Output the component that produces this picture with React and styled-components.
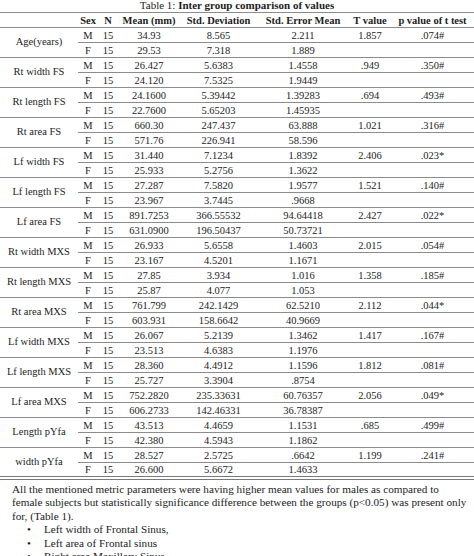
import React from "react";
import styled, { createGlobalStyle } from "styled-components";

const Global = createGlobalStyle`
  html, body { margin: 0; padding: 0; background: #ffffff; }
  body { width: 474px; height: 556px; overflow: hidden; font-family: "Liberation Serif", "Times New Roman", serif; color: #1c1c1c; }
`;

const Page = styled.div`
  width: 474px;
  display: flex;
  flex-direction: column;
`;

const Caption = styled.div`
  height: 12px;
  line-height: 12px;
  margin-top: -1px;
  margin-bottom: 1px;
  font-size: 11px;
  text-align: center;
  white-space: nowrap;
  b { font-weight: bold; }
`;

const Table = styled.table`
  width: 474px;
  table-layout: fixed;
  border-collapse: collapse;
  font-size: 10.5px;
  border-top: 1px solid #8c8c8c;
  border-bottom: 4px double #7a7a7a;
`;

const HeadCell = styled.th`
  height: 14px;
  padding: 0;
  font-weight: bold;
  text-align: center;
  white-space: nowrap;
  line-height: 13px;
  vertical-align: middle;
`;

const Row = styled.tr`
  height: 15px;
`;

const Cell = styled.td`
  padding: 0;
  text-align: center;
  white-space: nowrap;
  line-height: 13px;
  vertical-align: middle;
  border-top: 1px solid #8c8c8c;
`;

const LabelCell = styled(Cell)`
  padding-bottom: 2px;
`;

const Text = styled.div`
  padding: 3px 0 0 12px;
  font-size: 11.2px;
  line-height: 13.4px;
`;

const Para = styled.p`
  margin: 0;
  white-space: nowrap;
`;

const Bullets = styled.ul`
  margin: 0;
  padding: 0 0 0 44px;
  list-style: none;
  margin-left: -12px;
`;

const Bullet = styled.li`
  position: relative;
  &::before {
    content: "•";
    position: absolute;
    left: -17px;
  }
`;

const widths = [78, 20, 20, 62, 77, 92, 42, 83];

const groups = [
  ["Age(years)", ["34.93", "8.565", "2.211", "1.857", ".074#"], ["29.53", "7.318", "1.889"]],
  ["Rt width FS", ["26.427", "5.6383", "1.4558", ".949", ".350#"], ["24.120", "7.5325", "1.9449"]],
  ["Rt length FS", ["24.1600", "5.39442", "1.39283", ".694", ".493#"], ["22.7600", "5.65203", "1.45935"]],
  ["Rt area FS", ["660.30", "247.437", "63.888", "1.021", ".316#"], ["571.76", "226.941", "58.596"]],
  ["Lf width FS", ["31.440", "7.1234", "1.8392", "2.406", ".023*"], ["25.933", "5.2756", "1.3622"]],
  ["Lf length FS", ["27.287", "7.5820", "1.9577", "1.521", ".140#"], ["23.967", "3.7445", ".9668"]],
  ["Lf area FS", ["891.7253", "366.55532", "94.64418", "2.427", ".022*"], ["631.0900", "196.50437", "50.73721"]],
  ["Rt width MXS", ["26.933", "5.6558", "1.4603", "2.015", ".054#"], ["23.167", "4.5201", "1.1671"]],
  ["Rt length MXS", ["27.85", "3.934", "1.016", "1.358", ".185#"], ["25.87", "4.077", "1.053"]],
  ["Rt area MXS", ["761.799", "242.1429", "62.5210", "2.112", ".044*"], ["603.931", "158.6642", "40.9669"]],
  ["Lf width MXS", ["26.067", "5.2139", "1.3462", "1.417", ".167#"], ["23.513", "4.6383", "1.1976"]],
  ["Lf length MXS", ["28.360", "4.4912", "1.1596", "1.812", ".081#"], ["25.727", "3.3904", ".8754"]],
  ["Lf area MXS", ["752.2820", "235.33631", "60.76357", "2.056", ".049*"], ["606.2733", "142.46331", "36.78387"]],
  ["Length pYfa", ["43.513", "4.4659", "1.1531", ".685", ".499#"], ["42.380", "4.5943", "1.1862"]],
  ["width pYfa", ["28.527", "2.5725", ".6642", "1.199", ".241#"], ["26.600", "5.6672", "1.4633"]],
];

export default function App() {
  return (
    <Page>
      <Global />
      <Caption>
        Table 1: <b>Inter group comparison of values</b>
      </Caption>
      <Table>
        <colgroup>
          {widths.map((w, i) => (
            <col key={i} style={{ width: w }} />
          ))}
        </colgroup>
        <thead>
          <tr>
            <HeadCell></HeadCell>
            <HeadCell>Sex</HeadCell>
            <HeadCell>N</HeadCell>
            <HeadCell>Mean (mm)</HeadCell>
            <HeadCell>Std. Deviation</HeadCell>
            <HeadCell>Std. Error Mean</HeadCell>
            <HeadCell>T value</HeadCell>
            <HeadCell>p value of t test</HeadCell>
          </tr>
        </thead>
        <tbody>
          {groups.map(([label, m, f]) => (
            <React.Fragment key={label}>
              <Row>
                <LabelCell rowSpan={2}>{label}</LabelCell>
                <Cell>M</Cell>
                <Cell>15</Cell>
                {m.map((v, i) => (
                  <Cell key={i}>{v}</Cell>
                ))}
              </Row>
              <Row>
                <Cell>F</Cell>
                <Cell>15</Cell>
                {f.map((v, i) => (
                  <Cell key={i}>{v}</Cell>
                ))}
                <Cell></Cell>
                <Cell></Cell>
              </Row>
            </React.Fragment>
          ))}
        </tbody>
      </Table>
      <Text>
        <Para>
          All the mentioned metric parameters were having higher mean values for males as compared to
          <br />
          female subjects but statistically significance difference between the groups (p&lt;0.05) was present only
          <br />
          for, (Table 1).
        </Para>
        <Bullets>
          <Bullet>Left width of Frontal Sinus,</Bullet>
          <Bullet>Left area of Frontal sinus</Bullet>
          <Bullet>Right area Maxillary Sinus</Bullet>
        </Bullets>
      </Text>
    </Page>
  );
}
